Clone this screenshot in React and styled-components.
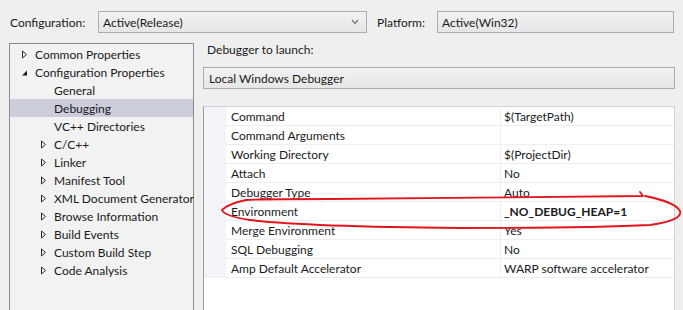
import React from 'react';
import styled, { createGlobalStyle } from 'styled-components';

const GlobalStyle = createGlobalStyle`
    html, body {
        margin: 0;
        padding: 0;
        background: #efefef;
    }
    body {
        font-family: Lato, "Noto Sans", "Liberation Sans", sans-serif;
        font-size: 12px;
        color: #1a1a22;
    }
`;

const Page = styled.div`
    position: relative;
    width: 683px;
    height: 310px;
    overflow: hidden;
    display: flex;
    flex-direction: column;
    background: #efefef;
`;

const TopBar = styled.div`
    display: flex;
    align-items: center;
    height: 22px;
    padding: 11px 0 0 10px;
`;

const Label = styled.span`
    width: ${ p => p.width }px;
    flex-shrink: 0;
    white-space: nowrap;
`;

const Combo = styled.div`
    display: flex;
    align-items: center;
    box-sizing: border-box;
    width: ${ p => p.width }px;
    height: ${ p => p.height || 22 }px;
    padding-left: ${ p => p.pad || 4 }px;
    border: 1px solid #acacac;
    background: linear-gradient(#f2f2f2, #e6e6e6);
    white-space: nowrap;
`;

const ComboText = styled.span`
    flex: 1;
`;

const Chevron = styled.svg`
    width: 8px;
    height: 6px;
    margin-right: 7px;
`;

const Body = styled.div`
    flex: 1;
    display: flex;
    margin-top: 10px;
    min-height: 0;
`;

const Tree = styled.div`
    width: 183px;
    margin-left: 9px;
    border: 1px solid #8c8c8c;
    border-bottom: none;
    padding-top: 1px;
    background: #f2f2f2;
`;

const TreeRow = styled.div`
    display: flex;
    align-items: center;
    height: 18px;
    padding-left: ${ p => p.indent }px;
    background: ${ p => p.selected ? '#cbcdd9' : 'transparent' };
    white-space: nowrap;
`;

const Expander = styled.svg`
    width: 7px;
    height: 9px;
    margin-right: 7px;
    flex-shrink: 0;
`;

const Gap = styled.span`
    display: inline-block;
    width: 14px;
`;

const Right = styled.div`
    display: flex;
    flex-direction: column;
    margin-left: 9px;
    width: 472px;
`;

const Caption = styled.div`
    height: 13px;
    line-height: 13px;
    margin: 0 0 11px 4px;
`;

const Grid = styled.div`
    flex: 1;
    margin-top: 17px;
    background: #fff;
    border-top: 1px solid #d2d2d2;
    border-left: 1px solid #9c9c9c;
    border-right: 1px solid #d2d2d2;
`;

const Row = styled.div`
    display: grid;
    grid-template-columns: 22px 275px 1fr;
    height: 19px;
`;

const Margin = styled.div`
    background: #f2f4f9;
`;

const Cell = styled.div`
    display: flex;
    align-items: center;
    padding-left: ${ p => p.pad }px;
    border-bottom: 1px solid #eeeeee;
    border-right: ${ p => p.divider ? '1px solid #eeeeee' : 'none' };
    font-weight: ${ p => p.bold ? 700 : 400 };
    white-space: nowrap;
`;

const Scribble = styled.svg`
    position: absolute;
    left: 0;
    top: 0;
    pointer-events: none;
`;

const tree = [
    { label: 'Common Properties', level: 0, arrow: 'closed' },
    { label: 'Configuration Properties', level: 0, arrow: 'open' },
    { label: 'General', level: 1 },
    { label: 'Debugging', level: 1, selected: true },
    { label: 'VC++ Directories', level: 1 },
    { label: 'C/C++', level: 1, arrow: 'closed' },
    { label: 'Linker', level: 1, arrow: 'closed' },
    { label: 'Manifest Tool', level: 1, arrow: 'closed' },
    { label: 'XML Document Generator', level: 1, arrow: 'closed' },
    { label: 'Browse Information', level: 1, arrow: 'closed' },
    { label: 'Build Events', level: 1, arrow: 'closed' },
    { label: 'Custom Build Step', level: 1, arrow: 'closed' },
    { label: 'Code Analysis', level: 1, arrow: 'closed' },
];

const props = [
    [ 'Command', '$(TargetPath)' ],
    [ 'Command Arguments', '' ],
    [ 'Working Directory', '$(ProjectDir)' ],
    [ 'Attach', 'No' ],
    [ 'Debugger Type', 'Auto' ],
    [ 'Environment', '_NO_DEBUG_HEAP=1', true ],
    [ 'Merge Environment', 'Yes' ],
    [ 'SQL Debugging', 'No' ],
    [ 'Amp Default Accelerator', 'WARP software accelerator' ],
];

const Arrow = ( { type } ) => {
    if ( type === 'open' ) {
        return (
            <Expander viewBox="0 0 7 9">
                <path d="M1 7.5 L6 7.5 L6 2.5 Z" fill="#1c1c1c" />
            </Expander>
        );
    }
    if ( type === 'closed' ) {
        return (
            <Expander viewBox="0 0 7 9">
                <path d="M1.5 1 L5.5 4.5 L1.5 8 Z" fill="none" stroke="#2a2a2a" strokeWidth="1" />
            </Expander>
        );
    }
    return <Gap />;
};

const App = () => {
    return (
        <Page>
            <GlobalStyle />
            <TopBar>
                <Label width={ 88 }>Configuration:</Label>
                <Combo width={ 269 }>
                    <ComboText>Active(Release)</ComboText>
                    <Chevron viewBox="0 0 8 6">
                        <path d="M1 1 L4 4.5 L7 1" fill="none" stroke="#7a7a7a" strokeWidth="1.4" />
                    </Chevron>
                </Combo>
                <Label width={ 10 } />
                <Label width={ 60 }>Platform:</Label>
                <Combo width={ 237 }>
                    <ComboText>Active(Win32)</ComboText>
                </Combo>
            </TopBar>
            <Body>
                <Tree>
                    { tree.map( ( item ) => (
                        <TreeRow key={ item.label } indent={ item.level ? 30 : 11 } selected={ item.selected }>
                            <Arrow type={ item.arrow } />
                            { item.label }
                        </TreeRow>
                    ) ) }
                </Tree>
                <Right>
                    <Caption>Debugger to launch:</Caption>
                    <Combo width={ 472 } pad={ 5 }>
                        <ComboText>Local Windows Debugger</ComboText>
                    </Combo>
                    <Grid>
                        { props.map( ( [ name, value, bold ] ) => (
                            <Row key={ name }>
                                <Margin />
                                <Cell pad={ 5 } divider>{ name }</Cell>
                                <Cell pad={ 3 } bold={ bold }>{ value }</Cell>
                            </Row>
                        ) ) }
                    </Grid>
                </Right>
            </Body>
            <Scribble width="683" height="310" viewBox="0 0 683 310">
                <path
                    d="M640 192 L643 196 C560 197 420 198 330 199 C290 199 262 199 246 200 C236 202 226 206 222 210 C224 215 236 218 250 220 C290 225 360 227 460 228 C540 228 610 227 650 225 C672 222 682 217 680 211 C676 204 664 200 645 196"
                    fill="none"
                    stroke="#e3141c"
                    strokeWidth="1.8"
                    strokeLinecap="round"
                    strokeLinejoin="round"
                />
            </Scribble>
        </Page>
    );
};

export default App;
